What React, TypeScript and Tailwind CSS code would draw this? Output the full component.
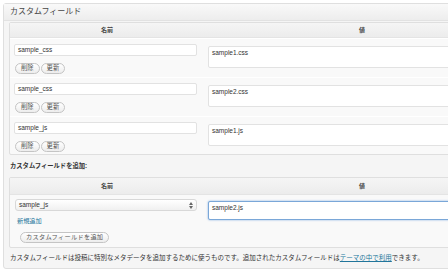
import React from "react";

const jp = '"Liberation Sans", "Noto Sans CJK JP", sans-serif';

function Btn({ children }: { children: React.ReactNode }) {
  return (
    <span className="inline-flex h-[11px] items-center rounded-full border border-[#c4c4c4] bg-gradient-to-b from-white to-[#ededed] px-[5px] text-[6.3px] leading-none text-[#555]">
      {children}
    </span>
  );
}

function Row({ name, value, h }: { name: string; value: string; h: string }) {
  return (
    <div className={"flex border-t border-white " + h}>
      <div className="w-[194px] shrink-0 pl-[4px] pr-[7px] pt-[5px]">
        <div className="flex h-[12px] items-center rounded-[2px] border border-[#e2e2e2] bg-white pl-[3px] text-[6.5px] text-[#333]">
          {name}
        </div>
        <div className="mt-[7px] flex gap-[1px] pl-[1px]">
          <Btn>削除</Btn>
          <Btn>更新</Btn>
        </div>
      </div>
      <div className="flex-1 pl-[4px] pt-[7px]">
        <div className="h-[22px] rounded-[2px] border border-[#e2e2e2] bg-white pl-[3px] pt-[3px] text-[6.5px] leading-none text-[#333]">
          {value}
        </div>
      </div>
    </div>
  );
}

export default function App() {
  return (
    <div
      className="h-[276px] w-[448px] overflow-hidden bg-white"
      style={{ fontFamily: jp }}
    >
      <div className="ml-[3px] mt-[3px] w-[530px] rounded-[3px] border border-[#dfdfdf] bg-[#f5f5f5]">
        <div className="flex h-[17px] items-center border-b border-[#e2e2e2] bg-gradient-to-b from-[#f9f9f9] to-[#ededed] pl-[6px] text-[8px] text-[#464646]">
          カスタムフィールド
        </div>
        <div className="pl-[5px] pt-[1px]">
          <div className="w-[512px] rounded-[2px] border border-[#dfdfdf] bg-[#f9f9f9]">
            <div className="flex h-[15px] items-center border-b border-[#e4e4e4] bg-gradient-to-b from-[#f5f5f5] to-[#ececec] text-[6px] font-bold text-[#444]">
              <div className="w-[194px] shrink-0 text-center">名前</div>
              <div className="flex-1 text-center">値</div>
            </div>
            <Row name="sample_css" value="sample1.css" h="h-[39px]" />
            <Row name="sample_css" value="sample2.css" h="h-[39px]" />
            <Row name="sample_js" value="sample1.js" h="h-[38px]" />
          </div>
          <div className="flex h-[22px] items-center pl-[1px] text-[6.3px] font-bold text-[#333]">
            カスタムフィールドを追加:
          </div>
          <div className="w-[512px] rounded-[2px] border border-[#dfdfdf] bg-[#f9f9f9]">
            <div className="flex h-[17px] items-center border-b border-[#e4e4e4] bg-gradient-to-b from-[#f5f5f5] to-[#ececec] text-[6px] font-bold text-[#444]">
              <div className="w-[194px] shrink-0 text-center">名前</div>
              <div className="flex-1 text-center">値</div>
            </div>
            <div className="flex h-[52px]">
              <div className="w-[194px] shrink-0 pl-[5px] pr-[7px] pt-[4px]">
                <div className="flex h-[12px] items-center justify-between rounded-[3px] border border-[#d8d8d8] bg-gradient-to-b from-white to-[#f0f0f0] pl-[3px] pr-[3px] text-[6.5px] text-[#333]">
                  <span>sample_js</span>
                  <svg width="4" height="7" viewBox="0 0 4 7">
                    <path d="M0 3 L2 0 L4 3 Z" fill="#666" />
                    <path d="M0 4 L2 7 L4 4 Z" fill="#666" />
                  </svg>
                </div>
                <div className="mt-[5px] pl-[2px] text-[6.2px] leading-[9px] text-[#21759b]">新規追加</div>
                <div className="mt-[7px] flex pl-[5px]">
                  <span className="inline-flex h-[11px] items-center rounded-full border border-[#c4c4c4] bg-gradient-to-b from-white to-[#ededed] px-[5px] text-[6.2px] tracking-[0.3px] leading-none text-[#555]">
                    カスタムフィールドを追加
                  </span>
                </div>
              </div>
              <div className="flex-1 pl-[4px] pt-[6px]">
                <div className="h-[19px] rounded-[2px] border border-[#7aa7d8] bg-white pl-[3px] pt-[3px] text-[6.5px] leading-none text-[#333] shadow-[0_0_2px_rgba(60,130,210,0.7)]">
                  sample2.js
                </div>
              </div>
            </div>
          </div>
          <div className="flex h-[20px] items-center whitespace-nowrap pl-[1px] text-[6.5px] text-[#333]">
            カスタムフィールドは投稿に特別なメタデータを追加するために使うものです。追加されたカスタムフィールドは
            <span className="text-[#21759b] underline">テーマの中で利用</span>
            できます。
          </div>
        </div>
      </div>
    </div>
  );
}
